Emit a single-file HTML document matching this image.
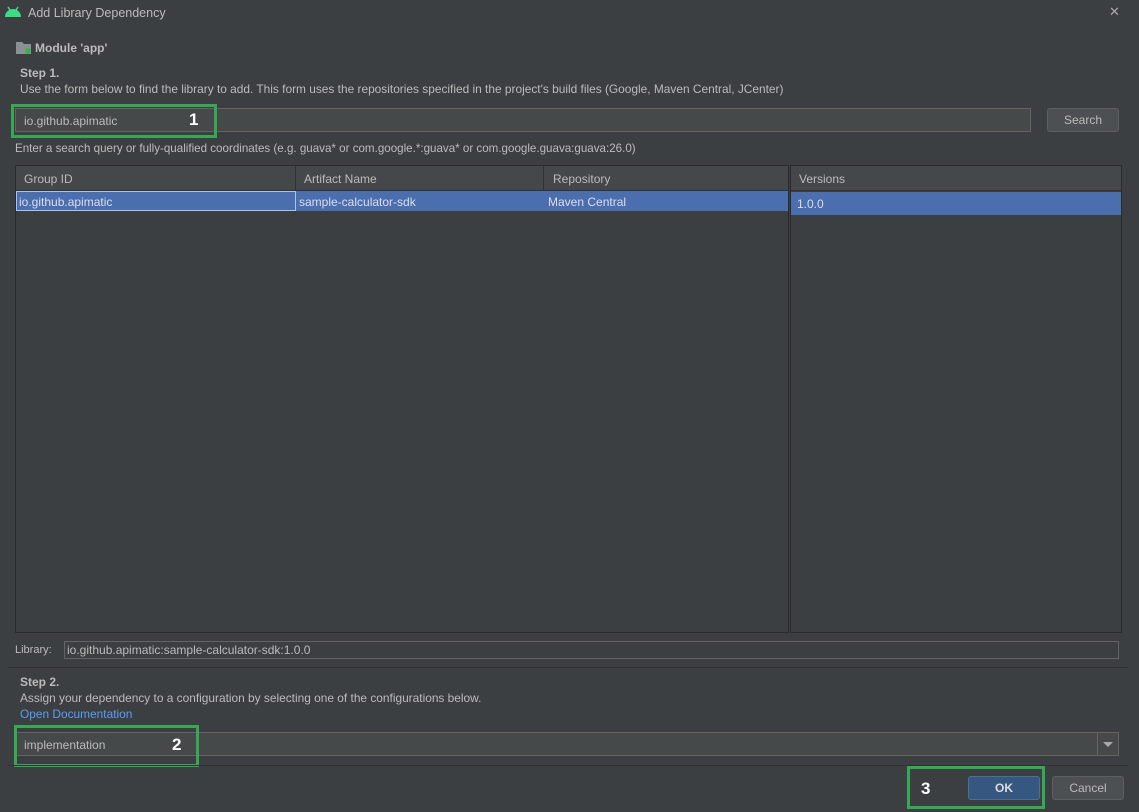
<!DOCTYPE html>
<html><head><style>
*{box-sizing:border-box;margin:0;padding:0}
body{width:1139px;height:812px;background:#3c3f41;font-family:"Liberation Sans",sans-serif;font-size:12px;color:#bbbbbb;position:relative;overflow:hidden}
.a{position:absolute}
.field{position:absolute;background:#45494a;border:1px solid #646464}
.green{position:absolute;border:3px solid #36a852}
.num{position:absolute;color:#fff;font-weight:bold;font-size:17px}
.btn{position:absolute;background:#4c5052;border:1px solid #5e6060;border-radius:3px;text-align:center;line-height:22px}
</style></head><body>
<svg class="a" style="left:4px;top:6px" width="18" height="12" viewBox="0 0 18 12"><path d="M1 11 A8 8 0 0 1 17 11 Z" fill="#3ddc84"/><line x1="4" y1="1" x2="6" y2="4" stroke="#3ddc84" stroke-width="1.5"/><line x1="14" y1="1" x2="12" y2="4" stroke="#3ddc84" stroke-width="1.5"/></svg>
<div class="a" style="left:28px;top:6px;font-size:12.5px;color:#bbb">Add Library Dependency</div>
<div class="a" style="left:1109px;top:4px;font-size:13px;color:#aaa">✕</div>
<svg class="a" style="left:16px;top:41px" width="16" height="13"><path d="M0 1h6l2 2h7v10H0z" fill="#8a9196"/><circle cx="12" cy="10" r="3" fill="#3fae4a"/></svg>
<div class="a" style="left:35px;top:41px;font-weight:bold">Module 'app'</div>
<div class="a" style="left:20px;top:66px;font-weight:bold">Step 1.</div>
<div class="a" style="left:20px;top:82px;font-size:11.9px">Use the form below to find the library to add. This form uses the repositories specified in the project's build files (Google, Maven Central, JCenter)</div>
<div class="field" style="left:15px;top:108px;width:1016px;height:24px"></div>
<div class="a" style="left:24px;top:114px">io.github.apimatic</div>
<div class="green" style="left:11px;top:104px;width:206px;height:34px"></div>
<div class="num" style="left:189px;top:110px">1</div>
<div class="btn" style="left:1047px;top:108px;width:72px;height:24px">Search</div>
<div class="a" style="left:15px;top:142px;font-size:11.6px">Enter a search query or fully-qualified coordinates (e.g. guava* or com.google.*:guava* or com.google.guava:guava:26.0)</div>
<div class="a" style="left:15px;top:165px;width:774px;height:468px;border:1px solid #2b2b2b;background:#3c3f41"></div>
<div class="a" style="left:16px;top:166px;width:772px;height:25px;background:#45484a;border-bottom:1px solid #323232"></div>
<div class="a" style="left:295px;top:166px;width:1px;height:25px;background:#323232"></div>
<div class="a" style="left:543px;top:166px;width:1px;height:25px;background:#323232"></div>
<div class="a" style="left:24px;top:172px">Group ID</div>
<div class="a" style="left:304px;top:172px">Artifact Name</div>
<div class="a" style="left:553px;top:172px">Repository</div>
<div class="a" style="left:16px;top:191px;width:772px;height:20px;background:#4b6eaf"></div>
<div class="a" style="left:16px;top:191px;width:280px;height:20px;border:1px solid #a9c4ee"></div>
<div class="a" style="left:19px;top:195px;color:#dde">io.github.apimatic</div>
<div class="a" style="left:299px;top:195px;color:#dde">sample-calculator-sdk</div>
<div class="a" style="left:548px;top:195px;color:#dde">Maven Central</div>
<div class="a" style="left:790px;top:165px;width:332px;height:468px;border:1px solid #2b2b2b;background:#3c3f41"></div>
<div class="a" style="left:791px;top:166px;width:330px;height:25px;background:#45484a;border-bottom:1px solid #323232"></div>
<div class="a" style="left:799px;top:172px">Versions</div>
<div class="a" style="left:791px;top:192px;width:330px;height:23px;background:#4b6eaf"></div>
<div class="a" style="left:797px;top:197px;color:#dde">1.0.0</div>
<div class="a" style="left:15px;top:644px;font-size:11px">Library:</div>
<div class="field" style="left:64px;top:641px;width:1055px;height:18px;background:#3c3f41"></div>
<div class="a" style="left:67px;top:643px">io.github.apimatic:sample-calculator-sdk:1.0.0</div>
<div class="a" style="left:8px;top:667px;width:1120px;height:1px;background:#323232"></div>
<div class="a" style="left:20px;top:675px;font-weight:bold">Step 2.</div>
<div class="a" style="left:20px;top:691px;font-size:11.9px">Assign your dependency to a configuration by selecting one of the configurations below.</div>
<div class="a" style="left:20px;top:707px;font-size:11.9px;color:#589df6">Open Documentation</div>
<div class="field" style="left:15px;top:732px;width:1104px;height:24px"></div>
<div class="a" style="left:1097px;top:733px;width:1px;height:22px;background:#646464"></div>
<div class="a" style="left:1103px;top:742px;border-left:5px solid transparent;border-right:5px solid transparent;border-top:5px solid #aaa"></div>
<div class="a" style="left:24px;top:738px">implementation</div>
<div class="green" style="left:14px;top:725px;width:185px;height:42px"></div>
<div class="num" style="left:172px;top:735px">2</div>
<div class="a" style="left:8px;top:765px;width:1120px;height:1px;background:#323232"></div>
<div class="green" style="left:907px;top:766px;width:138px;height:43px"></div>
<div class="num" style="left:921px;top:779px">3</div>
<div class="btn" style="left:968px;top:776px;width:72px;height:24px;background:#365880;border-color:#4a6f9a;color:#ddd;font-weight:bold">OK</div>
<div class="btn" style="left:1052px;top:776px;width:72px;height:24px">Cancel</div>
</body></html>
